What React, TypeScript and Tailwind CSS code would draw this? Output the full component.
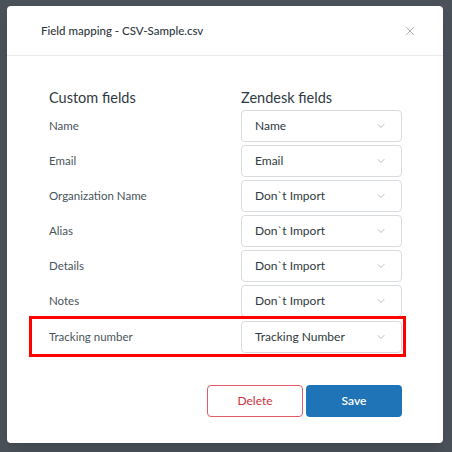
import { X, ChevronDown } from 'lucide-react';

const rows = [
  { label: 'Name', value: 'Name' },
  { label: 'Email', value: 'Email' },
  { label: 'Organization Name', value: 'Don`t Import' },
  { label: 'Alias', value: 'Don`t Import' },
  { label: 'Details', value: 'Don`t Import' },
  { label: 'Notes', value: 'Don`t Import' },
];

function FieldSelect({ value }: { value: string }) {
  return (
    <div className="flex h-[32px] w-[161px] items-center justify-between rounded-[4px] border border-[#d8dcde] bg-white pl-[13px] pr-[14px] text-[12px] text-[#2f3941]">
      <span>{value}</span>
      <ChevronDown className="h-[12px] w-[12px] text-[#87929d]" strokeWidth={1.25} />
    </div>
  );
}

function MappingRow({ label, value }: { label: string; value: string }) {
  return (
    <div className="flex items-center">
      <span className="w-[192px] text-[11.5px] text-[#49545c]">{label}</span>
      <FieldSelect value={value} />
    </div>
  );
}

export default function App() {
  return (
    <div
      className="min-h-[452px] w-[452px] bg-[#4a5158] pl-[7px] pr-[9px] pt-[6px]"
      style={{ fontFamily: 'Lato, "Noto Sans", sans-serif' }}
    >
      <div className="h-[437px] rounded-[4px] bg-white shadow-lg">
        <div className="flex h-[50px] items-center justify-between border-b border-[#e9ebed] pl-[34px] pr-[26px]">
          <span className="text-[11.5px] font-medium text-[#2f3941]">Field mapping - CSV-Sample.csv</span>
          <X className="h-[14px] w-[14px] text-[#87929d]" strokeWidth={1.25} />
        </div>
        <div className="pl-[42px] pr-[41px] pt-[32px]">
          <div className="mb-[2px] flex h-[20px] items-center text-[14.5px] text-[#2f3941]">
            <span className="w-[192px]">Custom fields</span>
            <span>Zendesk fields</span>
          </div>
          <div className="flex flex-col gap-[3px]">
            {rows.map((r) => (
              <MappingRow key={r.label} label={r.label} value={r.value} />
            ))}
            <div className="-ml-[20px] -mr-[4px] -mt-[4px] border-[3px] border-[#ff0000] pb-[1px] pl-[17px] pr-[1px] pt-[2px]">
              <MappingRow label="Tracking number" value="Tracking Number" />
            </div>
          </div>
          <div className="mt-[28px] flex justify-end gap-[3px]">
            <button
              type="button"
              className="h-[32px] w-[96px] rounded-[4px] border border-[#e35b66] bg-white text-[12px] text-[#cc3340]"
            >
              Delete
            </button>
            <button
              type="button"
              className="h-[32px] w-[96px] rounded-[4px] bg-[#1f73b7] text-[12px] font-semibold text-white"
            >
              Save
            </button>
          </div>
        </div>
      </div>
    </div>
  );
}
